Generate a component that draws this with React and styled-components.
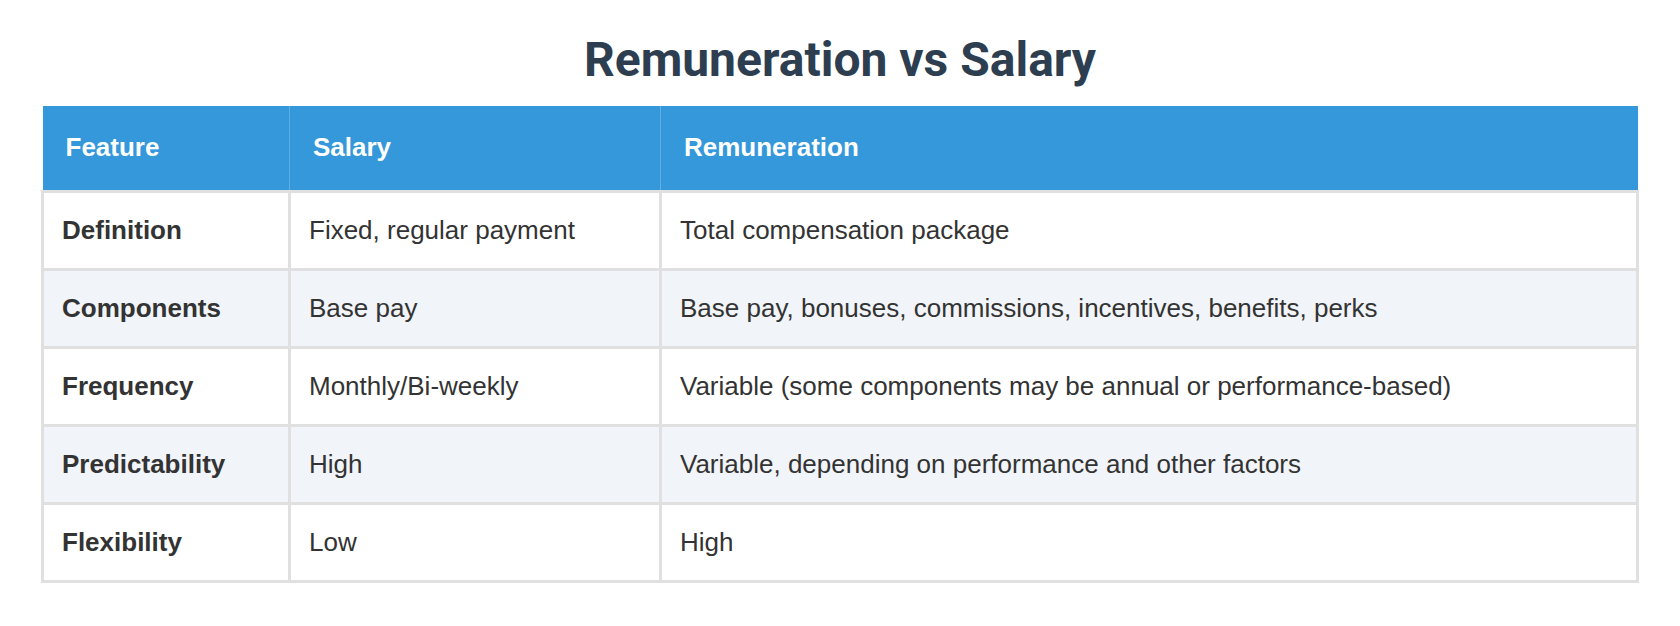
import React from 'react';
import styled, { createGlobalStyle } from 'styled-components';

const GlobalStyle = createGlobalStyle`
  html, body {
    margin: 0;
    padding: 0;
    background: #ffffff;
  }
  body {
    font-family: "Liberation Sans", Arial, sans-serif;
    color: #333333;
  }
`;

const Page = styled.div`
  padding: 31px 41px 40px 41px;
`;

const Title = styled.h1`
  margin: 0 0 18px 0;
  text-align: center;
  font-family: Roboto, "Liberation Sans", sans-serif;
  font-weight: 700;
  font-size: 48px;
  color: #2c3e50;
`;

const Table = styled.table`
  width: 100%;
  border-collapse: collapse;
  table-layout: fixed;
  font-size: 26px;
  line-height: 31px;
`;

const Col = styled.col`
  width: ${(p) => p.$w || 'auto'};
`;

const HeadCell = styled.th`
  background: #3498db;
  color: #ffffff;
  font-weight: 700;
  text-align: left;
  padding: 26px 23px 27px 23px;
  border-left: 1px solid #5caee4;
  &:first-child {
    border-left: none;
  }
`;

const Row = styled.tr`
  background: ${(p) => (p.$alt ? '#f1f4f9' : '#ffffff')};
`;

const Cell = styled.td`
  padding: 22px 18px;
  border: 3px solid #e0e0e0;
  font-weight: ${(p) => (p.$bold ? 700 : 400)};
  color: #333333;
  vertical-align: middle;
`;

const rows = [
  ['Definition', 'Fixed, regular payment', 'Total compensation package'],
  ['Components', 'Base pay', 'Base pay, bonuses, commissions, incentives, benefits, perks'],
  ['Frequency', 'Monthly/Bi-weekly', 'Variable (some components may be annual or performance-based)'],
  ['Predictability', 'High', 'Variable, depending on performance and other factors'],
  ['Flexibility', 'Low', 'High'],
];

export default function App() {
  return (
    <>
      <GlobalStyle />
      <Page>
        <Title>Remuneration vs Salary</Title>
        <Table>
          <colgroup>
            <Col $w="247px" />
            <Col $w="371px" />
            <Col />
          </colgroup>
          <thead>
            <tr>
              <HeadCell>Feature</HeadCell>
              <HeadCell>Salary</HeadCell>
              <HeadCell>Remuneration</HeadCell>
            </tr>
          </thead>
          <tbody>
            {rows.map((r, i) => (
              <Row key={r[0]} $alt={i % 2 === 1}>
                <Cell $bold>{r[0]}</Cell>
                <Cell>{r[1]}</Cell>
                <Cell>{r[2]}</Cell>
              </Row>
            ))}
          </tbody>
        </Table>
      </Page>
    </>
  );
}
